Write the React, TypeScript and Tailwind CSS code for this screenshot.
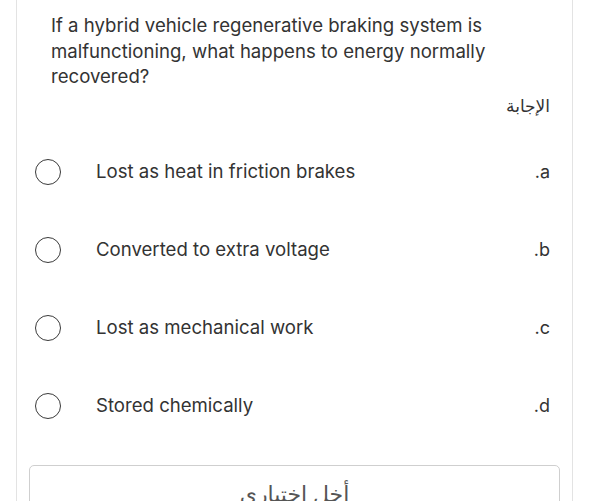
import React from "react";

const options = [
  { letter: ".a", text: "Lost as heat in friction brakes" },
  { letter: ".b", text: "Converted to extra voltage" },
  { letter: ".c", text: "Lost as mechanical work" },
  { letter: ".d", text: "Stored chemically" },
];

export default function App() {
  return (
    <div className="w-[589px] h-[501px] overflow-hidden bg-white px-4" style={{ fontFamily: 'Inter, "Liberation Sans", Arial, sans-serif' }}>
      <div className="border-x border-[#e3e3e3] h-[520px] flex flex-col">
        <div className="pl-[34px] pr-[50px] pt-[13px] text-[18.6px] leading-[25.5px] text-[#333333]">
          If a hybrid vehicle regenerative braking system is malfunctioning, what happens to energy normally recovered?
        </div>
        <div dir="rtl" className="pr-[22px] mt-[4px] text-[17px] leading-[24px] text-[#333333]" style={{ fontFamily: '"Noto Sans", "DejaVu Sans", sans-serif' }}>
          الإجابة
        </div>
        <div className="mt-[15px] flex flex-col">
          {options.map((o) => (
            <div key={o.letter} className="h-[78px] flex items-center pl-[18px] pr-[22px]">
              <div className="w-[26px] h-[26px] rounded-full border-[1.5px] border-[#3a3a3a] shrink-0" />
              <div className="ml-[35px] flex-1 text-[18.6px] text-[#333333]">{o.text}</div>
              <div className="text-[18px] text-[#333333]">{o.letter}</div>
            </div>
          ))}
        </div>
        <div className="mt-[20px] mx-3 border border-[#cfcfcf] rounded-[5px] h-[60px] flex justify-center pt-[12px]">
          <span dir="rtl" className="text-[22px] leading-[30px] text-[#555555]" style={{ fontFamily: '"Noto Sans", "DejaVu Sans", sans-serif' }}>
            أخلِ اختياري
          </span>
        </div>
      </div>
    </div>
  );
}
